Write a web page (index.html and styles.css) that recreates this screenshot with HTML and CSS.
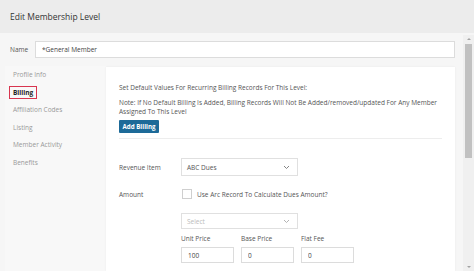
FILE: index.html
```html
<!DOCTYPE html>
<html lang="en">

<head>
    <meta charset="UTF-8">
    <meta name="viewport" content="width=device-width, initial-scale=1.0">
    <title>Edit Membership Level</title>
    <link rel="stylesheet" href="styles.css">
</head>

<body>
    <div class="modal">
        <div class="modal-header">Edit Membership Level</div>

        <div class="modal-body">
            <div class="body-content">
                <div class="name-row">
                    <label class="name-label">Name</label>
                    <input type="text" class="name-input" value="*General Member" />
                </div>

                <div class="columns">
                    <ul class="side-nav">
                        <li>Profile Info</li>
                        <li class="active"><span>Billing</span></li>
                        <li>Affiliation Codes</li>
                        <li>Listing</li>
                        <li>Member Activity</li>
                        <li>Benefits</li>
                    </ul>

                    <div class="panel">
                        <div class="billing-intro">
                            <p class="intro">Set Default Values For Recurring Billing Records For This Level:</p>
                            <p class="note">Note: If No Default Billing Is Added, Billing Records Will Not Be Added/removed/updated For Any Member Assigned To This Level</p>
                            <button class="btn-add">Add Billing</button>
                        </div>

                        <div class="form-row">
                            <div class="form-label">Revenue Item</div>
                            <div class="select">
                                <span>ABC Dues</span>
                                <svg width="7" height="5" viewBox="0 0 7 5"><path d="M1 1 L3.5 3.5 L6 1" fill="none" stroke="#777" stroke-width="0.9"/></svg>
                            </div>
                        </div>

                        <div class="form-row amount-row">
                            <div class="form-label">Amount</div>
                            <div class="amount-fields">
                                <label class="check-line">
                                    <span class="checkbox"></span>
                                    Use Arc Record To Calculate Dues Amount?
                                </label>
                                <div class="select disabled">
                                    <span>Select</span>
                                    <svg width="7" height="5" viewBox="0 0 7 5"><path d="M1 1 L3.5 3.5 L6 1" fill="none" stroke="#aaa" stroke-width="0.9"/></svg>
                                </div>
                                <div class="prices">
                                    <div class="price">
                                        <div class="price-label">Unit Price</div>
                                        <input type="text" class="price-input" value="100" />
                                    </div>
                                    <div class="price">
                                        <div class="price-label">Base Price</div>
                                        <input type="text" class="price-input" value="0" />
                                    </div>
                                    <div class="price">
                                        <div class="price-label">Flat Fee</div>
                                        <input type="text" class="price-input" value="0" />
                                    </div>
                                </div>
                            </div>
                        </div>
                    </div>
                </div>
            </div>

            <div class="scrollbar">
                <span class="arrow up"></span>
                <div class="thumb"></div>
                <span class="arrow down"></span>
            </div>
        </div>
    </div>
</body>

</html>
```

FILE: styles.css
```css
body {
    margin: 0;
    font-family: "Open Sans", "Noto Sans", sans-serif;
    font-size: 6.5px;
    color: #444;
    background-color: #f6f6f6;
}

.modal {
    width: 474px;
    height: 271px;
    overflow: hidden;
    display: flex;
    flex-direction: column;
}

.modal-header {
    height: 33px;
    flex-shrink: 0;
    display: flex;
    align-items: center;
    padding-left: 10px;
    background-color: #ececec;
    font-size: 8.5px;
    color: #333;
}

.modal-body {
    flex: 1;
    display: flex;
    min-height: 0;
}

.body-content {
    flex: 1;
    padding: 8px 8px 0 5px;
    display: flex;
    flex-direction: column;
    min-width: 0;
}

.name-row {
    display: flex;
    align-items: center;
    padding-left: 5px;
    height: 17px;
}

.name-label {
    width: 25px;
    font-size: 6.5px;
    color: #555;
}

.name-input {
    flex: 1;
    height: 17px;
    box-sizing: border-box;
    border: 1px solid #dcdcdc;
    background-color: #fff;
    padding: 0 6px;
    font-family: inherit;
    font-size: 6.5px;
    color: #444;
    outline: none;
}

.columns {
    flex: 1;
    display: flex;
    margin-top: 8px;
}

.side-nav {
    width: 101px;
    list-style: none;
    margin: 0;
    padding: 0 0 0 8px;
    box-sizing: border-box;
    background-color: #f8f8f8;
}

.side-nav li {
    height: 17.5px;
    line-height: 17.5px;
    font-size: 6.5px;
    color: #999;
}

.side-nav li.active span {
    display: inline-block;
    margin-left: -4px;
    padding: 0 3px;
    height: 11px;
    line-height: 11px;
    border: 1px solid #d8354f;
    color: #222;
    font-weight: bold;
}

.panel {
    flex: 1;
    background-color: #fff;
    margin-top: 1px;
    padding: 16px 13px 0;
    box-shadow: 0 0 2px rgba(0, 0, 0, 0.06);
}

.billing-intro {
    padding-bottom: 5px;
    border-bottom: 1px solid #ededed;
    margin-bottom: 19px;
}

.intro {
    margin: 0;
    font-size: 6.5px;
    line-height: 10px;
    color: #555;
}

.note {
    margin: 5px 0 0;
    font-size: 6.5px;
    line-height: 9px;
    color: #555;
}

.btn-add {
    margin-top: 4px;
    width: 40px;
    height: 13px;
    padding: 0;
    border: none;
    border-radius: 1px;
    background-color: #1d6a98;
    color: #fff;
    font-family: inherit;
    font-size: 6.2px;
    font-weight: bold;
    display: block;
}

.form-row {
    display: flex;
    align-items: center;
}

.form-label {
    width: 62px;
    font-size: 6.5px;
    color: #555;
}

.select {
    width: 117px;
    height: 18px;
    box-sizing: border-box;
    border: 1px solid #e0e0e0;
    display: flex;
    align-items: center;
    justify-content: space-between;
    padding: 0 7px 0 5px;
    font-size: 6.5px;
    color: #555;
}

.select.disabled {
    height: 16px;
    color: #bbb;
    margin-top: 14px;
}

.amount-row {
    align-items: flex-start;
    margin-top: 13px;
}

.amount-row .form-label {
    line-height: 10px;
    margin-top: 1px;
}

.check-line {
    display: flex;
    align-items: center;
    gap: 5px;
    height: 10px;
    font-size: 6.5px;
    color: #555;
}

.checkbox {
    width: 8px;
    height: 8px;
    border: 1px solid #cfcfcf;
    background-color: #fff;
    margin-left: 1px;
}

.prices {
    display: flex;
    gap: 7px;
    margin-top: 5px;
}

.price {
    display: flex;
    flex-direction: column;
}

.price-label {
    font-size: 6.5px;
    line-height: 10px;
    color: #555;
    margin-bottom: 3px;
}

.price-input {
    display: block;
    width: 53px;
    height: 16px;
    box-sizing: border-box;
    border: 1px solid #dcdcdc;
    padding: 0 6px;
    font-family: inherit;
    font-size: 6.5px;
    color: #444;
    outline: none;
}

.scrollbar {
    width: 11px;
    margin-top: 2px;
    background-color: #f0f0f0;
    display: flex;
    flex-direction: column;
    align-items: center;
}

.arrow {
    width: 0;
    height: 0;
    border-left: 2px solid transparent;
    border-right: 2px solid transparent;
    margin: 3px 0;
}

.arrow.up {
    border-bottom: 2px solid #a3a3a3;
}

.arrow.down {
    border-top: 2px solid #a3a3a3;
    margin-top: auto;
}

.thumb {
    width: 7px;
    height: 114px;
    background-color: #c1c1c1;
    margin-top: 1px;
}
```
